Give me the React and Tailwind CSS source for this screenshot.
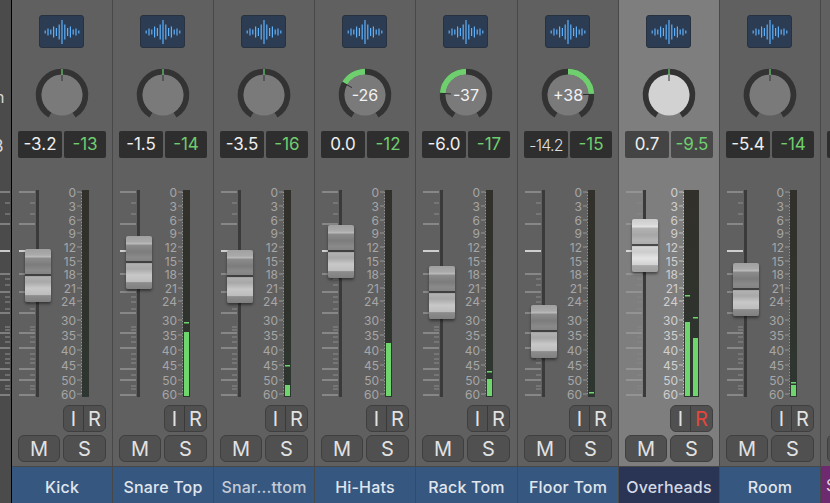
import React from "react";

const longTicks = [192, 224, 274, 292, 313, 333, 348, 369, 380, 395];
const shortTicks = [203, 214, 279, 285, 297, 302, 309, 327, 330, 337, 342, 354, 359, 363, 375, 386, 389];
const scale = [
  ["0", 192], ["3", 206], ["6", 220], ["9", 233], ["12", 247], ["15", 261], ["18", 274], ["21", 288],
  ["24", 301], ["30", 320], ["35", 335], ["40", 350], ["45", 365], ["50", 380], ["60", 394],
];
const waveBars = [3, 7, 5, 11, 8, 15, 24, 15, 8, 11, 5, 7, 3];
const sectionTop = 185;

const strips = [
  { name: "Kick", width: 101, pan: 0, volume: "-3.2", peak: "-13", fader: 249 },
  { name: "Snare Top", width: 101, pan: 0, volume: "-1.5", peak: "-14", fader: 236, meters: [{ top: 332, hold: 322 }] },
  { name: "Snar...ttom", width: 101, pan: 0, volume: "-3.5", peak: "-16", fader: 250, dim: true, meters: [{ top: 385, hold: 365 }] },
  { name: "Hi-Hats", width: 101, pan: -26, volume: "0.0", peak: "-12", fader: 225, meters: [{ top: 344, hold: 343 }] },
  { name: "Rack Tom", width: 102, pan: -37, volume: "-6.0", peak: "-17", fader: 266, meters: [{ top: 379, hold: 371 }] },
  { name: "Floor Tom", width: 101, pan: 38, volume: "-14.2", peak: "-15", fader: 305, tight: true, meters: [{ top: 396, hold: 392 }] },
  {
    name: "Overheads", width: 101, pan: 0, volume: "0.7", peak: "-9.5", fader: 219, selected: true, record: true,
    meters: [{ top: 322, hold: 295 }, { top: 338, hold: 317 }],
  },
  { name: "Room", width: 101, pan: 0, volume: "-5.4", peak: "-14", fader: 263, meters: [{ top: 385, hold: 382 }] },
];

const polar = (r, deg) => {
  const a = ((deg - 90) * Math.PI) / 180;
  return [27 + r * Math.cos(a), 27 + r * Math.sin(a)];
};

const arc = (r, from, to) => {
  const [x1, y1] = polar(r, from);
  const [x2, y2] = polar(r, to);
  const large = Math.abs(to - from) > 180 ? 1 : 0;
  return `M${x1} ${y1}A${r} ${r} 0 ${large} 1 ${x2} ${y2}`;
};

const WaveButton = () => (
  <div className="ml-[27px] flex h-[33px] w-[45px] items-center justify-center rounded-[3px] border border-[#27313f] bg-[#2c3c52]">
    <svg width="38" height="26" viewBox="0 0 38 26">
      {waveBars.map((h, i) => (
        <line key={i} x1={2.2 + i * 2.8} x2={2.2 + i * 2.8} y1={13 - h / 2} y2={13 + h / 2} stroke="#5fb0fa" strokeWidth="1.2" />
      ))}
    </svg>
  </div>
);

const Knob = ({ pan, selected }) => {
  const angle = (pan / 64) * 149;
  const [px1, py1] = polar(26, angle);
  const [px2, py2] = polar(15, angle);
  const [gx, gy] = polar(20, 0);
  const [gx2, gy2] = polar(26, 0);
  return (
    <svg width="54" height="54" viewBox="0 0 54 54" className="mt-[20px] ml-[23px] overflow-visible">
      <path d={arc(23.3, -149, 149)} fill="none" stroke="#333333" strokeWidth="6" />
      {pan !== 0 && (
        <path d={pan < 0 ? arc(23.3, angle, 0) : arc(23.3, 0, angle)} fill="none" stroke="#6fcf6f" strokeWidth="6" />
      )}
      <circle cx="27" cy="27" r="20.5" fill={selected ? "#d2d2d2" : "#7a7a7a"} />
      {pan === 0 ? (
        <>
          <line x1={gx} y1={gy} x2={gx2} y2={gy2} stroke="#6fcf6f" strokeWidth="1.2" />
          <line x1="27" y1="7" x2="27" y2="13" stroke="#333333" strokeWidth="1" />
        </>
      ) : (
        <>
          <line x1={px1} y1={py1} x2={px2} y2={py2} stroke="#2c2c2c" strokeWidth="1" />
          <text x="27" y="33" textAnchor="middle" className="fill-[#f2f2f2] text-[16px]">
            {pan > 0 ? `+${pan}` : pan}
          </text>
        </>
      )}
    </svg>
  );
};

const Ticks = ({ x2 }) => (
  <>
    {longTicks.map((y) => (
      <line key={y} x1={x2 - 16} x2={x2} y1={y - sectionTop} y2={y - sectionTop} stroke="#a2a2a2" strokeWidth="1.2" />
    ))}
    {shortTicks.map((y) => (
      <line key={y} x1={x2 - 5} x2={x2} y1={y - sectionTop} y2={y - sectionTop} stroke="#858585" strokeWidth="1.2" />
    ))}
    <line x1={x2 - 16} x2={x2} y1={251 - sectionTop} y2={251 - sectionTop} stroke="#f4f4f4" strokeWidth="1.5" />
  </>
);

const Fader = ({ top, selected }) => (
  <div className="relative h-[215px] w-[44px] shrink-0">
    <svg width="44" height="215" viewBox="0 0 44 215">
      <Ticks x2={23} />
      <rect x="24" y="5" width="3" height="207" fill="#3a3a3a" />
    </svg>
    <div
      className={`absolute left-[13px] h-[53px] w-[26px] rounded-[2px] shadow-[0_2px_3px_rgba(0,0,0,0.45)] ${
        selected
          ? "bg-[linear-gradient(#cccccc_0,#d8d8d8_11%,#e4e4e4_15%,#b4b4b4_17%,#a6a6a6_30%,#b4b4b4_40%,#aeaeae_47%,#4a4a4a_48%,#4a4a4a_51%,#d8d8d8_52%,#cccccc_62%,#e4e4e4_74%,#d2d2d2_86%,#a8a8a8_88%,#a0a0a0_100%)]"
          : "bg-[linear-gradient(#a0a0a0_0,#aaaaaa_11%,#bcbcbc_15%,#8c8c8c_17%,#7c7c7c_30%,#8a8a8a_40%,#848484_47%,#404040_48%,#404040_51%,#b2b2b2_52%,#a8a8a8_62%,#c8c8c8_74%,#bdbdbd_86%,#8c8c8c_88%,#808080_100%)]"
      }`}
      style={{ top: top - sectionTop }}
    />
  </div>
);

const Meter = ({ meters = [], selected }) => {
  const stereo = meters.length === 2;
  const labelEnd = stereo ? 15 : 20;
  const meterX = labelEnd + 6;
  const meterW = stereo ? 15 : 7;
  return (
    <svg width="57" height="215" viewBox="0 0 57 215" className="shrink-0 overflow-visible">
      <defs>
        <linearGradient id={stereo ? "well2" : "well1"} x1="0" x2="0" y1="0" y2="1">
          <stop offset="0" stopColor="#32302a" />
          <stop offset="0.45" stopColor="#30322c" />
          <stop offset="1" stopColor="#2e3631" />
        </linearGradient>
      </defs>
      {scale.map(([label, y]) => (
        <g key={label}>
          <text
            x={labelEnd}
            y={y - sectionTop + 5}
            textAnchor="end"
            className={`text-[12px] ${selected ? "fill-[#d0d0d0]" : "fill-[#a6a6a6]"}`}
          >
            {label}
          </text>
          <line x1={labelEnd + 1} x2={labelEnd + 5} y1={y - sectionTop} y2={y - sectionTop} stroke={selected ? "#c4c4c4" : "#959595"} />
        </g>
      ))}
      <line x1={labelEnd + 5.5} x2={labelEnd + 5.5} y1="7" y2="210" stroke={selected ? "#c4c4c4" : "#959595"} strokeDasharray="1 2" />
      <rect x={meterX} y="5" width={meterW} height="207" fill={`url(#${stereo ? "well2" : "well1"})`} />
      {meters.map((m, i) => {
        const x = stereo ? meterX + 1 + i * 8 : meterX + 1;
        return (
          <g key={i}>
            <rect x={x} y={m.hold - sectionTop} width="5" height="1.5" fill="#6fd66f" />
            <rect x={x} y={m.top - sectionTop} width="5" height={396 - m.top} fill="#6ed66c" />
          </g>
        );
      })}
    </svg>
  );
};

const SmallButton = ({ children, className = "" }) => (
  <div
    className={`flex h-[27px] items-center justify-center rounded-[6px] border border-[#3f3f3f] bg-[#505050] text-[20px] text-[#e2e2e2] ${className}`}
  >
    {children}
  </div>
);

const Strip = ({ strip }) => {
  const { name, width, pan, volume, peak, fader, meters, dim, tight, selected, record } = strip;
  return (
    <div
      className={`flex h-full shrink-0 flex-col border-r border-[#484848] pt-[15px] ${selected ? "bg-[#7e7e7e]" : "bg-[#606060]"}`}
      style={{ width }}
    >
      <WaveButton />
      <Knob pan={pan} selected={selected} />
      <div className="mt-[9px] ml-[6px] flex h-[27px] gap-[2px] text-[17px]">
        <div
          className={`flex w-[44px] items-center justify-center rounded-[2px] ${selected ? "bg-[#444444]" : "bg-[#2e2e2e]"} ${tight ? "text-[16px] font-light tracking-tighter text-[#dddddd]" : "text-[#efefef]"}`}
        >
          {volume}
        </div>
        <div className={`flex w-[42px] items-center justify-center rounded-[2px] text-[#6fcf6f] ${selected ? "bg-[#484848]" : "bg-[#2e2e2e]"}`}>
          {peak}
        </div>
      </div>
      <div className="mt-[27px] flex">
        <Fader top={fader} selected={selected} />
        <Meter meters={meters} selected={selected} />
      </div>
      <div className="mt-[5px] ml-[51px] flex h-[27px] w-[43px] rounded-[6px] border border-[#3f3f3f] bg-[#505050] text-[20px] text-[#e2e2e2]">
        <div className="flex w-[20px] items-center justify-center border-r border-[#3a3a3a]">I</div>
        <div className={`flex flex-1 items-center justify-center ${record ? "text-[#e5463c]" : ""}`}>R</div>
      </div>
      <div className="mt-[3px] ml-[6px] flex gap-[3px]">
        <SmallButton className="w-[42px]">M</SmallButton>
        <SmallButton className="w-[43px]">S</SmallButton>
      </div>
      <div
        className={`mt-[4px] flex h-[37px] items-center justify-center border-t border-[#484848] pt-[3px] text-[16px] font-medium tracking-[0.2px] ${
          selected ? "bg-[#2a3556] text-[#d4d9e4]" : dim ? "bg-[#36577f] text-[#c4ccd8]" : "bg-[#36577f] text-[#e0e6ee]"
        }`}
      >
        {name}
      </div>
    </div>
  );
};

export default function App() {
  return (
    <div className="flex h-[503px] w-[830px] overflow-hidden bg-[#606060] font-[Inter,sans-serif]">
      <div className="relative h-full w-[11px] shrink-0 overflow-hidden bg-[#4b4b4b]">
        <div className="absolute -left-[5px] top-[85px] text-[16px] text-[#d8d8d8]">n</div>
        <div className="absolute -left-[7px] top-[134px] text-[17px] text-[#d8d8d8]">8</div>
        <svg width="11" height="215" viewBox="0 0 11 215" className="absolute left-0 top-[185px]">
          <Ticks x2={10} />
        </svg>
      </div>
      <div className="h-full w-[1px] shrink-0 bg-black" />
      {strips.map((s) => (
        <Strip key={s.name} strip={s} />
      ))}
      <div className="flex h-full flex-1 flex-col overflow-hidden pl-[6px]">
        <div className="mt-[131px] h-[27px] w-[10px] shrink-0 rounded-[2px] bg-[#2e2e2e]" />
        <div className="mt-[277px] h-[27px] w-[10px] shrink-0 rounded-[6px] border border-[#3f3f3f] bg-[#505050]" />
        <div className="-ml-[6px] mt-[4px] flex h-[37px] items-center bg-[#6e2a6e] pl-[5px] text-[16px] text-[#e8d4e8]">S</div>
      </div>
    </div>
  );
}
